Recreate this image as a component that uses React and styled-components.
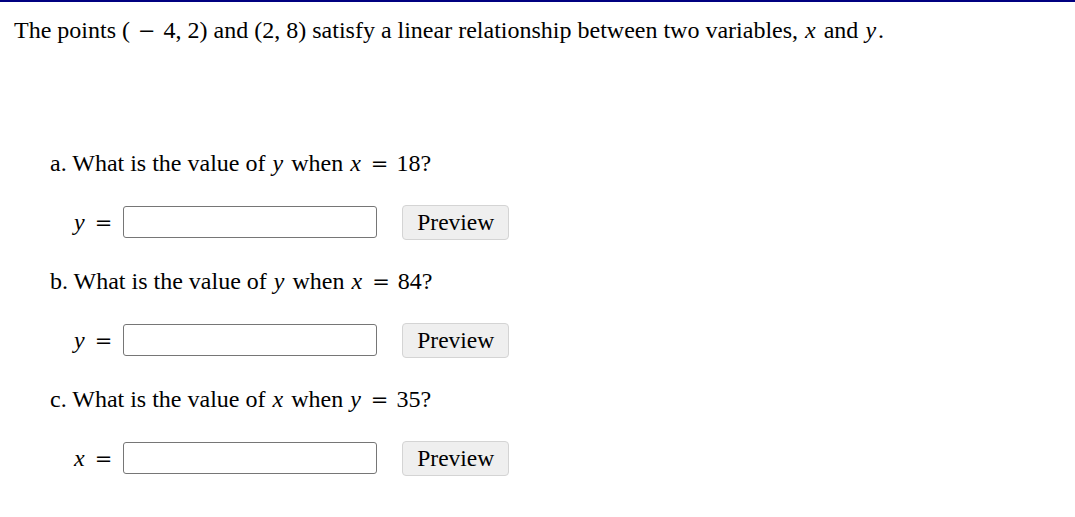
import React from "react";
import styled, { createGlobalStyle } from "styled-components";

const GlobalStyle = createGlobalStyle`
  html, body {
    margin: 0;
    padding: 0;
    background: #fff;
  }
  body {
    font-family: "Liberation Serif", "Times New Roman", serif;
    color: #000;
  }
`;

const Page = styled.div`
  border-top: 2px solid #000080;
  padding: 14px 14px 0 14px;
  font-size: 24px;
  line-height: 28px;
`;

const Intro = styled.p`
  margin: 0 0 105px 0;
`;

const Question = styled.div`
  padding-left: 36px;
`;

const Prompt = styled.p`
  margin: 0;
`;

const AnswerRow = styled.div`
  display: flex;
  align-items: center;
  height: 34px;
  margin: 28px 0;
  padding-left: 23px;
`;

const Label = styled.span`
  display: inline-block;
  margin-right: 3px;
  white-space: nowrap;
`;

const AnswerInput = styled.input`
  box-sizing: border-box;
  width: 254px;
  height: 32px;
  border: 1px solid #767676;
  border-radius: 3px;
  background: #fff;
  margin: 0 25px 0 0;
  padding: 0 4px;
  font-size: 16px;
`;

const PreviewButton = styled.button`
  box-sizing: border-box;
  height: 35px;
  padding: 0 14px;
  border: 1px solid #d4d4d4;
  border-radius: 4px;
  background: #efefef;
  color: #000;
  font-family: "Liberation Serif", "Times New Roman", serif;
  font-size: 23.5px;
`;

const V = styled.i`
  font-family: "Liberation Serif", "Times New Roman", serif;
  font-style: italic;
  padding: 0 2px 0 1px;
`;

const Op = styled.span`
  font-family: "DejaVu Serif", serif;
  font-size: 21px;
  line-height: 1;
  padding: 0 ${(p) => (p.$wide ? 8 : 8)}px;
`;

function Answer({ variable }) {
  return (
    <AnswerRow>
      <Label>
        <V>{variable}</V>
        <Op $wide>=</Op>
      </Label>
      <AnswerInput type="text" />
      <PreviewButton type="button">Preview</PreviewButton>
    </AnswerRow>
  );
}

const questions = [
  { letter: "a", find: "y", given: "x", value: "18" },
  { letter: "b", find: "y", given: "x", value: "84" },
  { letter: "c", find: "x", given: "y", value: "35" },
];

export default function App() {
  return (
    <>
      <GlobalStyle />
      <Page>
        <Intro>
          The points (<Op>−</Op>4, 2) and (2, 8) satisfy a linear relationship
          between two variables, <V>x</V> and <V>y</V>.
        </Intro>
        {questions.map((q) => (
          <Question key={q.letter}>
            <Prompt>
              {q.letter}. What is the value of <V>{q.find}</V> when{" "}
              <V>{q.given}</V>
              <Op $wide>=</Op>
              {q.value}?
            </Prompt>
            <Answer variable={q.find} />
          </Question>
        ))}
      </Page>
    </>
  );
}
